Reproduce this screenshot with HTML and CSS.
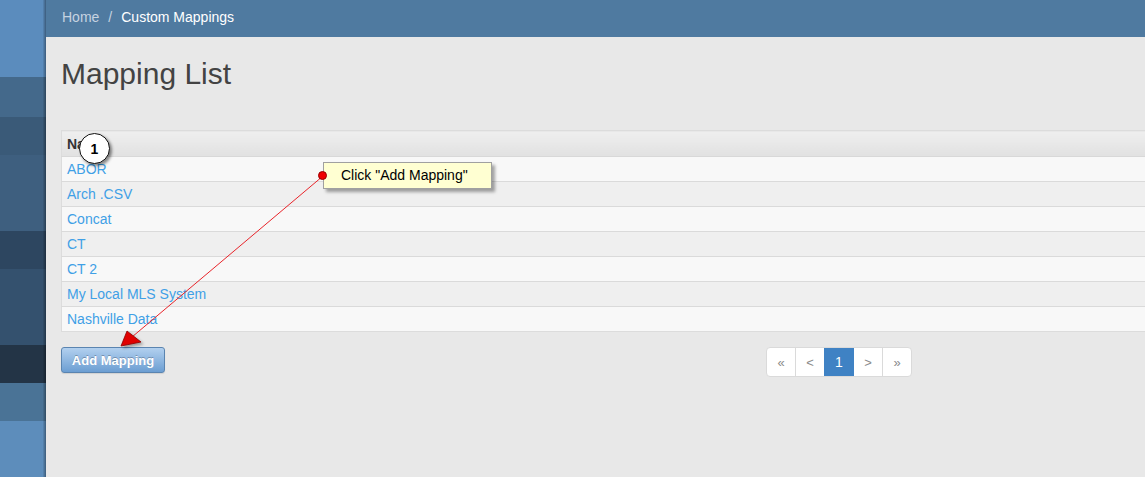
FILE: index.html
```html
<!DOCTYPE html>
<html>
<head>
<meta charset="utf-8">
<link rel="stylesheet" href="styles.css">
</head>
<body>
<div class="page">
  <aside class="sidebar">
    <div class="band b1"></div>
    <div class="band b2"></div>
    <div class="band b3"></div>
    <div class="band b4"></div>
    <div class="band b5"></div>
    <div class="band b6"></div>
    <div class="band b7"></div>
    <div class="band b8"></div>
    <div class="band b9"></div>
  </aside>
  <main class="main">
    <nav class="topbar">
      <span class="crumb">Home</span>
      <span class="sep">/</span>
      <span class="crumb current">Custom Mappings</span>
    </nav>
    <section class="content">
      <h1 class="title">Mapping List</h1>
      <table class="grid">
        <thead>
          <tr><th>Name</th></tr>
        </thead>
        <tbody>
          <tr><td><a href="#">ABOR</a></td></tr>
          <tr><td><a href="#">Arch .CSV</a></td></tr>
          <tr><td><a href="#">Concat</a></td></tr>
          <tr><td><a href="#">CT</a></td></tr>
          <tr><td><a href="#">CT 2</a></td></tr>
          <tr><td><a href="#">My Local MLS System</a></td></tr>
          <tr><td><a href="#">Nashville Data</a></td></tr>
        </tbody>
      </table>
      <div class="actions">
        <div class="left"><button class="btn">Add Mapping</button></div>
        <ul class="pager">
          <li>&laquo;</li>
          <li>&lt;</li>
          <li class="active">1</li>
          <li>&gt;</li>
          <li>&raquo;</li>
        </ul>
        <div></div>
      </div>
    </section>
  </main>
</div>
<div class="annot">
  <svg class="arrow" width="1145" height="477" viewBox="0 0 1145 477">
    <defs>
      <filter id="sh" x="-50%" y="-50%" width="200%" height="200%">
        <feDropShadow dx="2" dy="2" stdDeviation="1.5" flood-color="#000" flood-opacity="0.35"/>
      </filter>
    </defs>
    <line x1="323" y1="176" x2="132" y2="337" stroke="#e8242a" stroke-width="1"/>
    <polygon points="121,346 127,331 141,342" fill="#e00000" stroke="#8a0000" stroke-width="0.8" filter="url(#sh)"/>
  </svg>
  <div class="callout">Click "Add Mapping"</div>
  <div class="dot"></div>
  <div class="badge">1</div>
</div>
</body>
</html>
```
FILE: styles.css
```css
html, body {
  margin: 0;
  padding: 0;
  overflow: hidden;
}
body {
  font-family: "Liberation Sans", Arial, sans-serif;
  font-size: 14px;
  background: #e8e8e8;
  width: 1145px;
  height: 477px;
  position: relative;
}
.page {
  display: flex;
  height: 477px;
}
.sidebar {
  width: 46px;
  flex: 0 0 46px;
  display: flex;
  flex-direction: column;
  position: relative;
}
.sidebar::after {
  content: "";
  position: absolute;
  top: 0;
  right: 0;
  bottom: 0;
  width: 3px;
  background: linear-gradient(to right, rgba(0,0,0,0.05), rgba(0,0,0,0.35));
}
.band { width: 100%; }
.b1 { height: 77px; background: #5b8cbd; }
.b2 { height: 40px; background: #44698b; }
.b3 { height: 38px; background: #3a5a78; }
.b4 { height: 76px; background: #3e5f7f; }
.b5 { height: 38px; background: #2d4660; }
.b6 { height: 76px; background: #34516e; }
.b7 { height: 38px; background: #233446; }
.b8 { height: 38px; background: #4a7396; }
.b9 { flex: 1; background: #5d8dbb; }

.main {
  flex: 1;
  min-width: 0;
  overflow: hidden;
  display: flex;
  flex-direction: column;
}
.topbar {
  height: 34px;
  flex: 0 0 34px;
  padding-bottom: 3px;
  background: #4f7aa0;
  display: flex;
  align-items: center;
  padding-left: 16px;
  gap: 9px;
  color: #c6d3e0;
  font-size: 14px;
}
.crumb.current { color: #ffffff; }
.sep { color: #c6d3e0; }

.content {
  width: 1556px;
  padding: 20px 0 0 15px;
}
.title {
  margin: 0 0 40px 0;
  font-size: 30px;
  font-weight: normal;
  line-height: 33px;
  color: #434343;
}
.grid {
  width: 100%;
  border-collapse: collapse;
  border: 1px solid #dcdcdc;
}
.grid th {
  text-align: left;
  font-weight: bold;
  color: #333;
  height: 25px;
  padding: 0 5px;
  background: linear-gradient(to bottom, #efefef, #e1e1e1);
  border-bottom: 1px solid #d8d8d8;
}
.grid td {
  height: 24px;
  padding: 0 5px;
  border-top: 1px solid #dadada;
}
.grid tbody tr:nth-child(odd) td { background: #f8f8f8; }
.grid tbody tr:nth-child(even) td { background: #efefef; }
.grid a {
  color: #3fa0e6;
  text-decoration: none;
}

.actions {
  display: grid;
  grid-template-columns: 1fr auto 1fr;
  align-items: start;
  margin-top: 15px;
}
.btn {
  width: 104px;
  height: 26px;
  border: 1px solid #5a84b0;
  border-radius: 3px;
  background: linear-gradient(to bottom, #b2d0ef, #6c9ed2);
  color: #fff;
  font-family: "Liberation Sans", Arial, sans-serif;
  font-weight: bold;
  font-size: 13px;
  text-shadow: 0 -1px 0 rgba(0,0,0,0.25);
  padding: 0;
  box-shadow: 0 1px 1px rgba(0,0,0,0.1);
}
.pager {
  list-style: none;
  margin: 0;
  padding: 0;
  display: flex;
  border-radius: 4px;
  border: 1px solid #dadada;
  overflow: hidden;
  background: #fff;
}
.pager li {
  width: 28px;
  height: 28px;
  display: flex;
  align-items: center;
  justify-content: center;
  color: #8a8a8a;
  font-size: 13px;
  border-left: 1px solid #dadada;
}
.pager li:first-child { border-left: none; }
.pager li.active {
  background: #3f82c4;
  color: #fff;
  width: 30px;
  font-size: 14px;
  border-left: none;
}
.pager li.active + li { border-left: none; }

.annot {
  position: absolute;
  left: 0;
  top: 0;
  width: 1145px;
  height: 477px;
  pointer-events: none;
}
.arrow {
  position: absolute;
  left: 0;
  top: 0;
}
.callout {
  position: absolute;
  left: 323px;
  top: 162px;
  width: 150px;
  height: 25px;
  padding-left: 17px;
  line-height: 25px;
  background: #ffffd2;
  border: 1px solid #a0a0a0;
  box-shadow: 3px 3px 3px rgba(0,0,0,0.35);
  font-size: 14px;
  color: #000;
}
.dot {
  position: absolute;
  left: 318px;
  top: 171px;
  width: 9px;
  height: 9px;
  border-radius: 50%;
  background: #f00000;
  border: 1px solid #900;
  box-sizing: border-box;
}
.badge {
  position: absolute;
  left: 79px;
  top: 133px;
  width: 29px;
  height: 29px;
  border-radius: 50%;
  background: #fff;
  border: 1.5px solid #111;
  box-shadow: 2px 2px 3px rgba(0,0,0,0.45);
  display: flex;
  align-items: center;
  justify-content: center;
  font-weight: bold;
  font-size: 14px;
  color: #000;
}
```
